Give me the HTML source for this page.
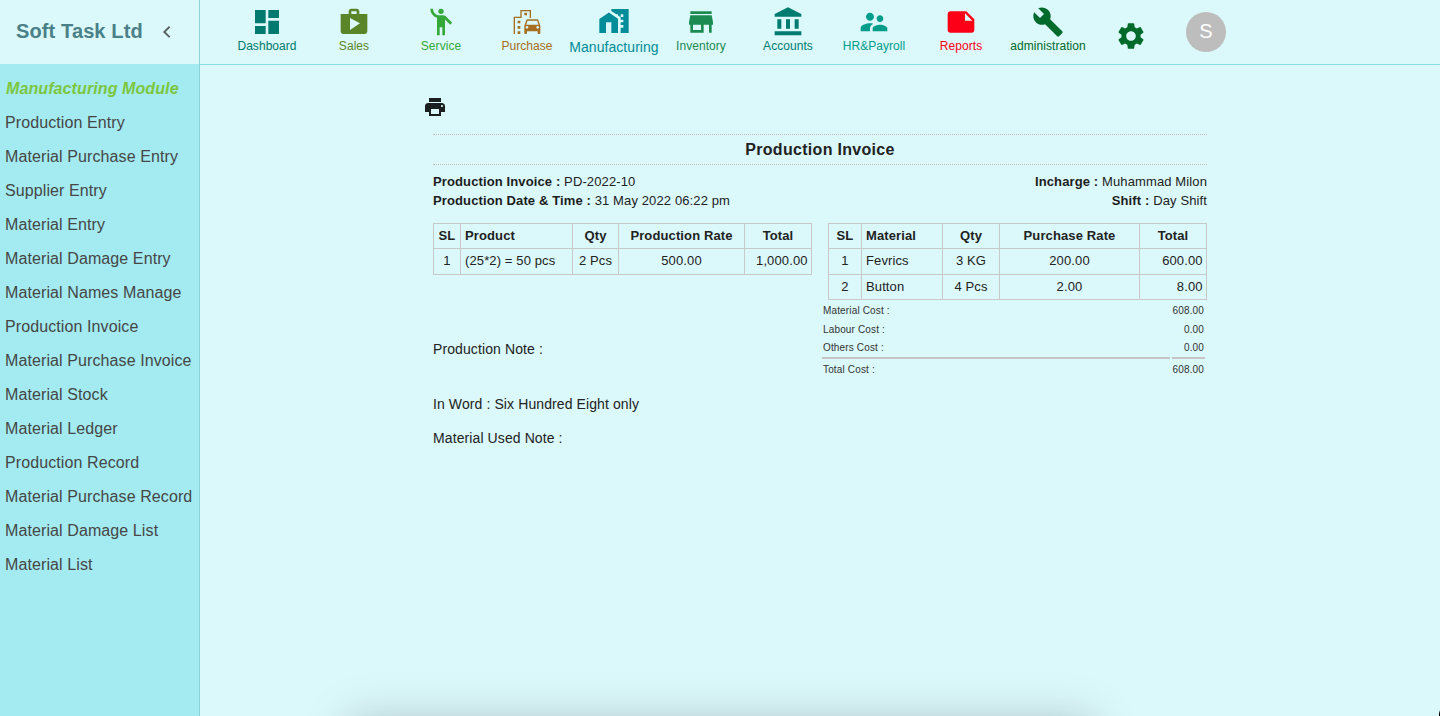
<!DOCTYPE html>
<html>
<head>
<meta charset="utf-8">
<style>
html,body{margin:0;padding:0;}
body{width:1440px;height:716px;overflow:hidden;position:relative;background:#dbf8fa;font-family:"Liberation Sans",sans-serif;color:#222;}
.abs{position:absolute;}
#side{left:0;top:0;width:199px;height:716px;border-right:1px solid #8cd0d8;}
#sidetop{left:0;top:0;width:199px;height:64px;background:#dbf8fa;}
#sidebody{left:0;top:64px;width:199px;height:652px;background:#a3ebf1;}
#brand{left:16px;top:18px;font-size:20px;font-weight:bold;color:#4a8087;white-space:nowrap;line-height:26px;letter-spacing:0.12px;}
#chev{left:160px;top:24px;width:14px;height:16px;}
.mi{position:absolute;left:5px;font-size:16px;color:#464646;white-space:nowrap;letter-spacing:0.1px;line-height:20px;}
#modtitle{left:6px;font-size:16px;font-weight:bold;font-style:italic;color:#7cc63e;letter-spacing:0.1px;white-space:nowrap;line-height:20px;}
#hline{left:200px;top:64px;width:1240px;height:1px;background:#86dee7;}
.nav{position:absolute;top:0;width:100px;height:64px;}
.nav svg{position:absolute;left:34px;top:6px;width:32px;height:32px;}
.nav span{position:absolute;left:-20px;width:140px;text-align:center;top:37px;font-size:12px;line-height:18px;white-space:nowrap;letter-spacing:0.05px;}

.dot{height:0;border-top:1px dotted #c4bfbf;}
.info{font-size:13px;line-height:18px;white-space:nowrap;letter-spacing:0.12px;color:#222;}
.info b{color:#1d1d1d;}
.tb{border-collapse:collapse;table-layout:fixed;font-size:13px;letter-spacing:0.12px;color:#222;}
.tb th,.tb td{border:1px solid #c9c8c8;padding:0 4px 2px 4px;text-align:center;white-space:nowrap;overflow:hidden;}
.tb th{font-weight:bold;height:22px;}
.tb tr.r td{height:23px;}
.tb tr.r2 td{height:22px;}
.cost{font-size:10px;line-height:14px;white-space:nowrap;color:#333;letter-spacing:0.15px;}
.note{font-size:14px;line-height:18px;white-space:nowrap;color:#222;letter-spacing:0.1px;}
</style>
</head>
<body>
<div id="sidetop" class="abs"></div>
<div id="sidebody" class="abs"></div>
<div id="side" class="abs"></div>
<div id="brand" class="abs">Soft Task Ltd</div>
<svg id="chev" class="abs" viewBox="0 0 14 16"><path d="M9.6 2.7 L4.3 7.9 L9.6 13.1" fill="none" stroke="#5a6061" stroke-width="1.9"/></svg>

<div id="modtitle" class="abs" style="top:79px">Manufacturing Module</div>
<div class="mi" style="top:113px">Production Entry</div>
<div class="mi" style="top:147px">Material Purchase Entry</div>
<div class="mi" style="top:181px">Supplier Entry</div>
<div class="mi" style="top:215px">Material Entry</div>
<div class="mi" style="top:249px">Material Damage Entry</div>
<div class="mi" style="top:283px">Material Names Manage</div>
<div class="mi" style="top:317px">Production Invoice</div>
<div class="mi" style="top:351px">Material Purchase Invoice</div>
<div class="mi" style="top:385px">Material Stock</div>
<div class="mi" style="top:419px">Material Ledger</div>
<div class="mi" style="top:453px">Production Record</div>
<div class="mi" style="top:487px">Material Purchase Record</div>
<div class="mi" style="top:521px">Material Damage List</div>
<div class="mi" style="top:555px">Material List</div>

<div id="hline" class="abs"></div>

<!-- NAV -->
<div class="nav" style="left:217px;color:#00796f">
<svg viewBox="0 0 24 24"><path fill="currentColor" d="M3 13h8V3H3v10zm0 8h8v-6H3v6zm10 0h8V11h-8v10zm0-18v6h8V3h-8z"/></svg>
<span>Dashboard</span></div>

<div class="nav" style="left:304px;color:#5b8529">
<svg viewBox="0 0 24 24"><path fill="currentColor" d="M16 6V4c0-1.11-.89-2-2-2h-4c-1.11 0-2 .89-2 2v2H2v13c0 1.11.89 2 2 2h16c1.11 0 2-.89 2-2V6h-6zm-6-2h4v2h-4V4zM9 18V9l7.5 4L9 18z"/></svg>
<span>Sales</span></div>

<div class="nav" style="left:391px;color:#35a83a">
<svg viewBox="0 0 24 24"><circle fill="currentColor" cx="12" cy="4" r="2"/><path fill="currentColor" d="M15.89 8.11C15.5 7.72 14.83 7 13.53 7h-2.54C8.24 6.99 6 4.75 6 2H4c0 3.16 2.11 5.84 5 6.71V22h2v-6h2v6h2V10.05L18.95 14l1.41-1.41-4.47-4.48z"/></svg>
<span>Service</span></div>

<div class="nav" style="left:477px;color:#a76e20">
<svg viewBox="0 0 24 24"><path fill="currentColor" d="M20.57 10.66c-.14-.4-.52-.66-.97-.66h-7.19c-.46 0-.83.26-.98.66L10 14.77l.01 5.51c0 .38.31.72.69.72h.62c.38 0 .68-.38.68-.76V19h8v1.24c0 .38.31.76.69.76h.61c.38 0 .69-.34.69-.72l.01-1.37v-4.14l-1.43-4.11zm-8.16.34h7.19l1.03 3h-9.25l1.03-3zM12 17c-.55 0-1-.45-1-1s.45-1 1-1 1 .45 1 1-.45 1-1 1zm8 0c-.55 0-1-.45-1-1s.45-1 1-1 1 .45 1 1-.45 1-1 1z"/><path fill="currentColor" d="M14 9h1V3H7v5H2v13h1V9h5V4h6z"/><path fill="currentColor" d="M5 11h2v2H5zm5-6h2v2h-2zM5 15h2v2H5zm0 4h2v2H5z"/></svg>
<span>Purchase</span></div>

<div class="nav" style="left:564px;color:#008c98">
<svg viewBox="0 0 24 24" style="top:5px"><path fill="currentColor" d="M8.17 5.7 1 10.48V21h5v-8h4v8h5V10.25z"/><path fill="currentColor" fill-rule="evenodd" d="M10 3v1.51l2 1.33L13.73 7H15v.85l2 1.34V11h2v2h-2v2h2v2h-2v4h6V3H10zm9 6h-2V7h2v2z"/></svg>
<span style="font-size:14px;top:38px">Manufacturing</span></div>

<div class="nav" style="left:651px;color:#1c8b52">
<svg viewBox="0 0 24 24"><path fill="currentColor" d="M20 4H4v2h16V4zm1 10v-2l-1-5H4l-1 5v2h1v6h10v-6h4v6h2v-6h1zm-9 4H6v-4h6v4z"/></svg>
<span>Inventory</span></div>

<div class="nav" style="left:738px;color:#007b70">
<svg viewBox="0 0 24 24"><path fill="currentColor" d="M4 10h3v7H4zM10.5 10h3v7h-3zM2 19h20v3H2zM17 10h3v7h-3zM12 1 2 6v2h20V6z"/></svg>
<span>Accounts</span></div>

<div class="nav" style="left:824px;color:#009d8b">
<svg viewBox="0 0 24 24"><path fill="currentColor" d="M16.5 12c1.38 0 2.49-1.12 2.49-2.5S17.88 7 16.5 7C15.12 7 14 8.12 14 9.5s1.12 2.5 2.5 2.5zM9 11c1.66 0 2.99-1.34 2.99-3S10.66 5 9 5C7.34 5 6 6.34 6 8s1.34 3 3 3zm7.5 3c-1.83 0-5.5.92-5.5 2.75V19h11v-2.25c0-1.83-3.67-2.75-5.5-2.75zM9 13c-2.33 0-7 1.17-7 3.5V19h7v-2.25c0-.85.33-2.34 2.37-3.47C10.5 13.1 9.66 13 9 13z"/></svg>
<span>HR&amp;Payroll</span></div>

<div class="nav" style="left:911px;color:#fb0016">
<svg viewBox="0 0 24 24"><path fill="currentColor" d="M22 10l-6-6H4c-1.1 0-2 .9-2 2v12.01c0 1.1.9 1.99 2 1.99l16-.01c1.1 0 2-.89 2-1.99v-8zm-7-4.5l5.5 5.5H15V5.5z"/></svg>
<span>Reports</span></div>

<div class="nav" style="left:998px;color:#006a2a">
<svg viewBox="0 0 24 24"><path fill="currentColor" d="M22.7 19l-9.1-9.1c.9-2.3.4-5-1.5-6.9-2-2-5-2.4-7.4-1.3L9 6 6 9 1.6 4.7C.4 7.1.9 10.1 2.9 12.1c1.9 1.9 4.6 2.4 6.9 1.5l9.1 9.1c.4.4 1 .4 1.4 0l2.3-2.3c.5-.4.5-1.1.1-1.4z"/></svg>
<span>administration</span></div>

<svg class="abs" style="left:1115px;top:20px;width:32px;height:32px" viewBox="0 0 24 24"><path fill="#006a2a" d="M19.14 12.94c.04-.3.06-.61.06-.94 0-.32-.02-.64-.07-.94l2.03-1.58c.18-.14.23-.41.12-.61l-1.92-3.32c-.12-.22-.37-.29-.59-.22l-2.39.96c-.5-.38-1.03-.7-1.62-.94l-.36-2.54c-.04-.24-.24-.41-.48-.41h-3.84c-.24 0-.43.17-.47.41l-.36 2.54c-.59.24-1.13.57-1.62.94l-2.39-.96c-.22-.08-.47 0-.59.22L2.74 8.87c-.12.21-.08.47.12.61l2.03 1.58c-.05.3-.09.63-.09.94s.02.64.07.94l-2.03 1.58c-.18.14-.23.41-.12.61l1.92 3.32c.12.22.37.29.59.22l2.39-.96c.5.38 1.030.7 1.62.94l.36 2.54c.05.24.24.41.48.41h3.84c.24 0 .44-.17.47-.41l.36-2.54c.59-.24 1.13-.56 1.62-.94l2.39.96c.22.08.47 0 .59-.22l1.92-3.32c.12-.22.07-.47-.12-.61l-2.01-1.58zM12 15.6c-1.98 0-3.6-1.62-3.6-3.6s1.62-3.6 3.6-3.6 3.6 1.62 3.6 3.6-1.62 3.6-3.6 3.6z"/></svg>

<div class="abs" style="left:1186px;top:12px;width:40px;height:40px;border-radius:50%;background:#bdbdbd;color:#fff;font-size:20px;line-height:38px;text-align:center;">S</div>


<svg class="abs" style="left:423px;top:95px;width:24px;height:24px" viewBox="0 0 24 24"><path fill="#1c1f20" d="M19 8H5c-1.66 0-3 1.34-3 3v6h4v4h12v-4h4v-6c0-1.66-1.34-3-3-3zm-3 11H8v-5h8v5zm3-7c-.55 0-1-.45-1-1s.45-1 1-1 1 .45 1 1-.45 1-1 1zm-1-9H6v4h12V3z"/></svg>
<div class="abs dot" style="left:433px;top:134px;width:774px;"></div>
<div class="abs" style="left:433px;top:140px;width:774px;text-align:center;font-size:16px;font-weight:bold;line-height:20px;letter-spacing:0.3px;">Production Invoice</div>
<div class="abs dot" style="left:433px;top:164px;width:774px;"></div>
<div class="abs info" style="left:433px;top:173px;"><b>Production Invoice :</b> PD-2022-10</div>
<div class="abs info" style="left:433px;top:192px;"><b>Production Date &amp; Time :</b> 31 May 2022 06:22 pm</div>
<div class="abs info" style="right:233px;top:173px;text-align:right"><b>Incharge :</b> Muhammad Milon</div>
<div class="abs info" style="right:233px;top:192px;text-align:right"><b>Shift :</b> Day Shift</div>

<table class="abs tb" style="left:433px;top:223px;width:379px;">
<colgroup><col style="width:27px"><col style="width:112px"><col style="width:46px"><col style="width:126px"><col style="width:67px"></colgroup>
<tr class="h"><th>SL</th><th style="text-align:left">Product</th><th>Qty</th><th>Production Rate</th><th>Total</th></tr>
<tr class="r"><td>1</td><td style="text-align:left">(25*2) = 50 pcs</td><td>2 Pcs</td><td>500.00</td><td style="text-align:right;padding-right:3.4px">1,000.00</td></tr>
</table>

<table class="abs tb" style="left:828px;top:223px;width:379px;">
<colgroup><col style="width:33px"><col style="width:81px"><col style="width:57px"><col style="width:140px"><col style="width:67px"></colgroup>
<tr class="h"><th>SL</th><th style="text-align:left">Material</th><th>Qty</th><th>Purchase Rate</th><th>Total</th></tr>
<tr class="r"><td>1</td><td style="text-align:left">Fevrics</td><td>3 KG</td><td>200.00</td><td style="text-align:right;padding-right:3.4px">600.00</td></tr>
<tr class="r2"><td>2</td><td style="text-align:left">Button</td><td>4 Pcs</td><td>2.00</td><td style="text-align:right;padding-right:3.4px">8.00</td></tr>
</table>

<div class="abs cost" style="left:823px;top:304px;">Material Cost :</div>
<div class="abs cost" style="right:236px;top:304px;text-align:right">608.00</div>
<div class="abs cost" style="left:823px;top:323px;">Labour Cost :</div>
<div class="abs cost" style="right:236px;top:323px;text-align:right">0.00</div>
<div class="abs cost" style="left:823px;top:341px;">Others Cost :</div>
<div class="abs cost" style="right:236px;top:341px;text-align:right">0.00</div>
<div class="abs" style="left:822px;top:357px;width:348px;height:2px;background:#c8c4c4"></div>
<div class="abs" style="left:1172px;top:357px;width:33px;height:2px;background:#c8c4c4"></div>
<div class="abs cost" style="left:823px;top:363px;">Total Cost :</div>
<div class="abs cost" style="right:236px;top:363px;text-align:right">608.00</div>

<div class="abs note" style="left:433px;top:340px;">Production Note :</div>
<div class="abs note" style="left:433px;top:395px;">In Word : Six Hundred Eight only</div>
<div class="abs note" style="left:433px;top:429px;">Material Used Note :</div>

<div class="abs" style="left:354px;top:716px;width:734px;height:300px;background:#dbf8fa;box-shadow:0px 11px 15px -7px rgba(0,0,0,0.22),0px 24px 38px 3px rgba(0,0,0,0.15),0px 9px 46px 8px rgba(0,0,0,0.14);"></div>
<div class="abs" style="left:1439px;top:710px;width:1px;height:6px;background:linear-gradient(#dbf8fa,#000 60%);"></div>
</body>
</html>
